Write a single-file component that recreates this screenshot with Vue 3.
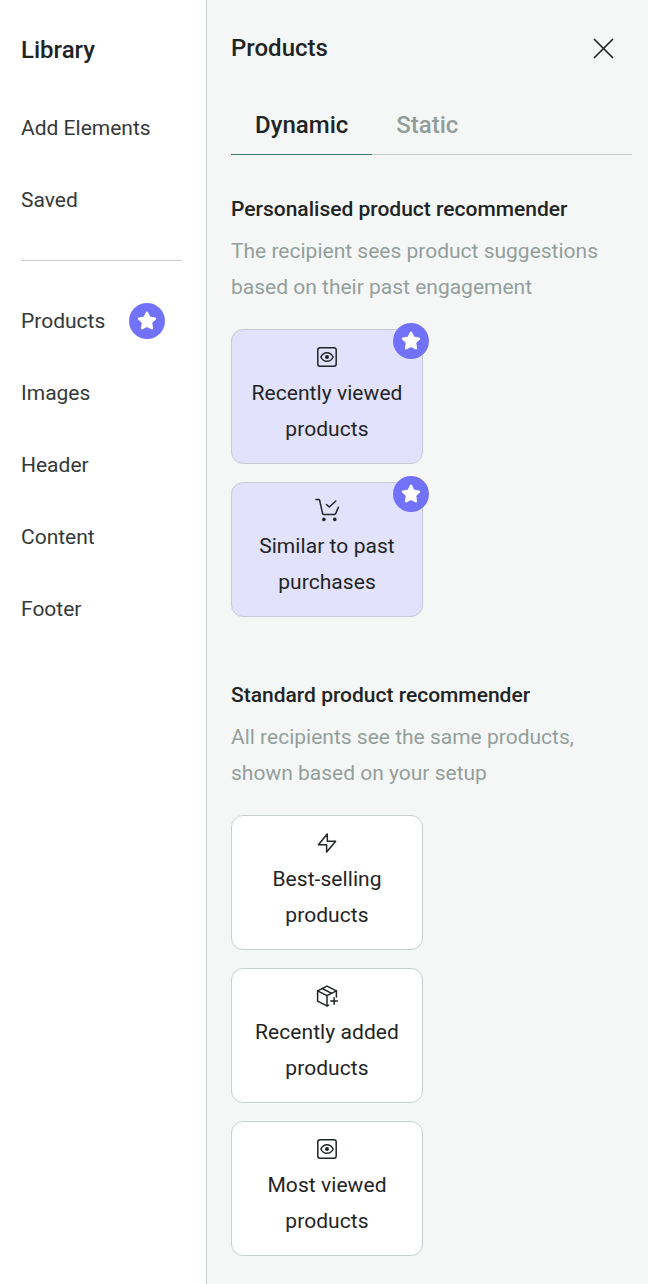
<script setup>
import { ref } from 'vue'

const topLinks = ['Add Elements', 'Saved']
const blockLinks = [
  { label: 'Products', starred: true },
  { label: 'Images' },
  { label: 'Header' },
  { label: 'Content' },
  { label: 'Footer' },
]

const tabs = ['Dynamic', 'Static']
const activeTab = ref('Dynamic')

const starPath =
  'M18 9.8 20.5 14.8 26 15.6 22 19.5 22.9 25.2 18 22.7 13.1 25.2 14 19.5 10 15.6 15.5 14.8Z'

const sections = [
  {
    title: 'Personalised product recommender',
    text: ['The recipient sees product suggestions', 'based on their past engagement'],
    cards: [
      { lines: ['Recently viewed', 'products'], icon: 'eye', starred: true },
      { lines: ['Similar to past', 'purchases'], icon: 'cart', starred: true },
    ],
  },
  {
    title: 'Standard product recommender',
    text: ['All recipients see the same products,', 'shown based on your setup'],
    cards: [
      { lines: ['Best-selling', 'products'], icon: 'bolt' },
      { lines: ['Recently added', 'products'], icon: 'box' },
      { lines: ['Most viewed', 'products'], icon: 'eye' },
    ],
  },
]
</script>

<template>
  <div class="library">
    <nav class="sidebar">
      <h1 class="sidebar-title">Library</h1>
      <a v-for="link in topLinks" :key="link" class="sidebar-link">{{ link }}</a>
      <hr class="divider" />
      <a v-for="link in blockLinks" :key="link.label" class="sidebar-link">
        {{ link.label }}
        <svg v-if="link.starred" class="star" viewBox="0 0 36 36">
          <circle cx="18" cy="18" r="18" />
          <path :d="starPath" />
        </svg>
      </a>
    </nav>

    <main class="panel">
      <header class="panel-header">
        <h2 class="panel-title">Products</h2>
        <button class="close" aria-label="Close">
          <svg viewBox="0 0 20 20">
            <path d="M1.5 1.5 19.5 19.5M19.5 1.5 1.5 19.5" />
          </svg>
        </button>
      </header>

      <div class="tabs">
        <button
          v-for="tab in tabs"
          :key="tab"
          class="tab"
          :class="{ active: tab === activeTab }"
          @click="activeTab = tab"
        >
          {{ tab }}
        </button>
      </div>

      <section v-for="section in sections" :key="section.title" class="section">
        <h3 class="section-title">{{ section.title }}</h3>
        <p class="section-text">
          <span v-for="line in section.text" :key="line">{{ line }}</span>
        </p>
        <div class="cards">
          <div
            v-for="card in section.cards"
            :key="card.lines[0]"
            class="card"
            :class="{ highlighted: card.starred }"
          >
            <svg class="card-icon" viewBox="0 0 24 24">
              <g v-if="card.icon === 'eye'">
                <rect x="2.8" y="2.8" width="18.4" height="18.4" rx="2.2" />
                <path d="M5.8 12C7.2 9.2 9.3 7.7 12 7.7S16.8 9.2 18.2 12C16.8 14.8 14.7 16.3 12 16.3S7.2 14.8 5.8 12Z" />
                <circle class="fill" cx="12" cy="12" r="2" />
              </g>
              <g v-else-if="card.icon === 'cart'">
                <path d="M1 1.4H3.6Q4.4 1.4 4.6 2.2L7.5 15.2Q7.8 16.4 9 16.4H19.3Q20.4 16.4 20.8 15.4L23.4 9.2" />
                <path d="M11.6 6.6 14.3 9 20.8 3" />
                <circle class="fill" cx="8.9" cy="21.4" r="1.8" />
                <circle class="fill" cx="19.8" cy="21.4" r="1.8" />
              </g>
              <path v-else-if="card.icon === 'bolt'" d="M12.3 3 3.4 13.7H11.6V21L20.7 10.3H12.3Z" />
              <g v-else>
                <path d="M21.4 13V6.8L12 2.1 2.6 6.8V17.2L12 21.9 13.6 21.1" />
                <path d="M2.6 6.8 12 11.7 21.4 6.8M12 11.7V21.9M7.2 4.5 16.7 9.3" />
                <path d="M15.8 17H22.4M19.1 13.8V20.2" />
              </g>
            </svg>
            <span v-for="line in card.lines" :key="line">{{ line }}</span>
            <svg v-if="card.starred" class="star card-star" viewBox="0 0 36 36">
              <circle cx="18" cy="18" r="18" />
              <path :d="starPath" />
            </svg>
          </div>
        </div>
      </section>
    </main>
  </div>
</template>

<style>
body {
  margin: 0;
}
</style>

<style scoped>
.library {
  display: flex;
  height: 1284px;
  overflow: hidden;
  font-family: Roboto, 'Liberation Sans', sans-serif;
  font-size: 21px;
  line-height: 36px;
  color: #1f2424;
  background: #f4f7f6;
}

h1,
h2,
h3,
p {
  margin: 0;
  font-weight: 500;
}

button {
  padding: 0;
  border: 0;
  background: none;
  font-family: inherit;
}

.sidebar {
  box-sizing: border-box;
  width: 207px;
  flex-shrink: 0;
  padding: 32px 24px 0 21px;
  border-right: 1px solid #c8cfcf;
  background: #fff;
}

.sidebar-title {
  margin-bottom: 42px;
  font-size: 24px;
}

.sidebar-link {
  display: flex;
  align-items: center;
  gap: 24px;
  height: 36px;
  margin-bottom: 36px;
  color: #353939;
}

.divider {
  height: 1px;
  margin: 42px 0;
  border: 0;
  background: #c8cecc;
}

.star {
  width: 36px;
  height: 36px;
}

.star circle {
  fill: #7272f8;
}

.star path {
  fill: #fff;
  stroke: #fff;
  stroke-width: 2.4;
  stroke-linejoin: round;
}

.panel {
  flex: 1;
  padding: 30px 16px 0 24px;
}

.panel-header {
  display: flex;
  align-items: center;
  justify-content: space-between;
}

.panel-title {
  font-size: 24px;
}

.close {
  width: 20px;
  height: 20px;
  margin-right: 19px;
}

.close svg {
  display: block;
  overflow: visible;
  fill: none;
  stroke: #1f2424;
  stroke-width: 1.7;
  stroke-linecap: round;
}

.tabs {
  display: flex;
  height: 59px;
  margin: 30px 0 36px;
  box-shadow: inset 0 -1px #c5cbc9;
}

.tab {
  padding: 0 24px 2px;
  color: #929d99;
  font-size: 24px;
  font-weight: 500;
}

.tab.active {
  color: #1f2424;
  box-shadow: inset 0 -1px #3d7a72;
}

.section {
  margin-bottom: 60px;
}

.section-title {
  margin-bottom: 6px;
  font-size: 21px;
}

.section-text {
  color: #949e9b;
  font-weight: 400;
}

.section-text span {
  display: block;
}

.cards {
  display: flex;
  flex-direction: column;
  gap: 18px;
  margin-top: 24px;
}

.card {
  position: relative;
  display: flex;
  box-sizing: border-box;
  flex-direction: column;
  align-items: center;
  width: 192px;
  height: 135px;
  padding-top: 9px;
  border: 1px solid #c8cfcf;
  border-radius: 12px;
  background: #fff;
  font-weight: 450;
  letter-spacing: 0.06px;
}

.highlighted {
  border-color: #c9c9d8;
  background: #e2e2fd;
}

.card-icon {
  width: 24px;
  height: 24px;
  margin: 6px 0;
  fill: none;
  stroke: #1f2424;
  stroke-width: 1.5;
  stroke-linecap: round;
  stroke-linejoin: round;
}

.card-icon .fill {
  fill: #1f2424;
  stroke: none;
}

.card-star {
  position: absolute;
  top: -7px;
  right: -7px;
}
</style>
